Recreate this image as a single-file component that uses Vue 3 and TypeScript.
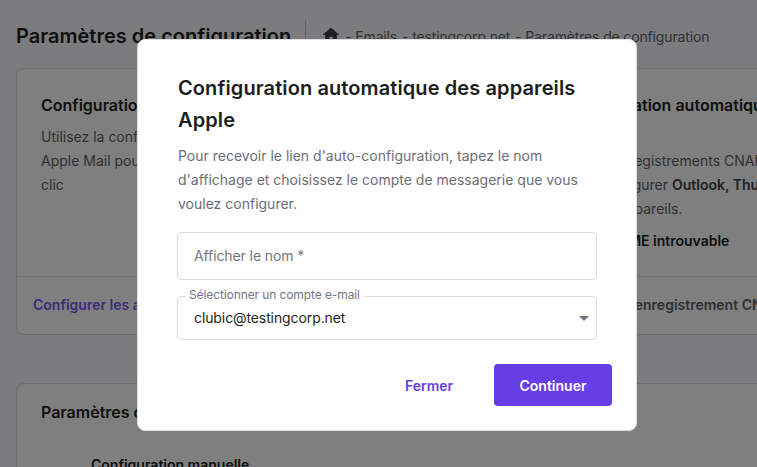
<script setup lang="ts">
const email = 'clubic@testingcorp.net'
</script>

<template>
  <div class="page">
    <header class="head">
      <h1 class="page-title">Paramètres de configuration</h1>
      <nav class="crumbs">
        <svg class="home" viewBox="0 0 24 24" width="20" height="20"><path d="M10 20v-6h4v6h5v-8h3L12 3 2 12h3v8z" fill="#3f3e48" /></svg>
        <span>- Emails</span><span>- testingcorp.net</span><span>- Paramètres de configuration</span>
      </nav>
    </header>

    <section class="cards">
      <article class="card">
        <div class="card-body">
          <h2>Configuration automatique</h2>
          <p>Utilisez la configuration automatique de<br />Apple Mail pour configurer votre compte en un<br />clic</p>
        </div>
        <div class="card-foot">Configurer les appareils Apple</div>
      </article>
      <article class="card">
        <div class="card-body">
          <h2>Configuration automatique des<br />appareils</h2>
          <p>Via les enregistrements CNAME, vous pouvez<br />pour configurer <b>Outlook, Thunderbird</b> et<br />par vos appareils.</p>
          <p class="warn">CNAME introuvable</p>
        </div>
        <div class="card-foot muted">Ajouter un enregistrement CNAME</div>
      </article>
    </section>

    <section class="card settings">
      <h2>Paramètres du compte</h2>
      <h3>Configuration manuelle</h3>
    </section>

    <div class="overlay">
      <div class="modal">
        <h2 class="modal-title">Configuration automatique des appareils Apple</h2>
        <p class="modal-text">Pour recevoir le lien d'auto-configuration, tapez le nom d'affichage et choisissez le compte de messagerie que vous voulez configurer.</p>
        <div class="field name">Afficher le nom *</div>
        <div class="field select">
          <span class="legend">Sélectionner un compte e-mail</span>
          <span class="value">{{ email }}</span>
          <span class="caret"></span>
        </div>
        <div class="actions">
          <button class="close" type="button">Fermer</button>
          <button class="go" type="button">Continuer</button>
        </div>
      </div>
    </div>
  </div>
</template>

<style scoped>
.page {
  position: relative;
  width: 757px;
  height: 467px;
  overflow: hidden;
  padding: 20px 0 0 16px;
  box-sizing: border-box;
  background: #f9f8ff;
  font-family: Inter, "Liberation Sans", sans-serif;
  color: #1d1e20;
}
.head {
  display: flex;
  align-items: center;
  height: 32px;
  margin-bottom: 16px;
}
.page-title {
  margin: 0;
  padding-right: 14px;
  font-size: 20px;
  font-weight: 600;
  line-height: 32px;
  letter-spacing: 0.01px;
  white-space: nowrap;
  border-right: 1px solid #c8c8cc;
}
.crumbs {
  display: flex;
  align-items: center;
  gap: 5px;
  padding-left: 15px;
  font-size: 14px;
  letter-spacing: -0.15px;
  color: #5f6066;
  white-space: nowrap;
}
.home { margin: -3px -1px 0 0; }
.cards {
  display: grid;
  grid-template-columns: 500px 500px;
  gap: 24px;
  width: 1024px;
}
.card {
  background: #fff;
  border: 1px solid #d8dae0;
  border-radius: 8px;
  box-sizing: border-box;
}
.cards .card {
  height: 267px;
  display: flex;
  flex-direction: column;
}
.card-body {
  flex: 1;
  padding: 24px 24px 0;
  white-space: nowrap;
}
.card h2 {
  margin: 0 0 8px;
  font-size: 16px;
  font-weight: 600;
  line-height: 24px;
}
.card-body p {
  margin: 0;
  font-size: 14px;
  line-height: 24px;
  color: #5f6066;
}
.card-body b {
  font-weight: 600;
  color: #3f4046;
}
.card-body .warn {
  margin-top: 8px;
  padding-left: 32px;
  font-weight: 600;
  color: #1d1e20;
}
.card-foot {
  height: 57px;
  line-height: 56px;
  padding-left: 16px;
  border-top: 1px solid #d8dae0;
  font-size: 14px;
  font-weight: 600;
  color: #7a55f0;
}
.card-foot.muted {
  padding-left: 20px;
  color: #5f6066;
}
.settings {
  margin-top: 48px;
  width: 1024px;
  height: 200px;
  padding: 16px 24px;
}
.settings h3 {
  margin: 31px 0 0 50px;
  font-size: 14px;
  font-weight: 600;
  line-height: 20px;
}
.overlay {
  position: absolute;
  inset: 0;
  display: flex;
  justify-content: center;
  align-items: flex-start;
  padding: 39px 0 0 17px;
  box-sizing: border-box;
  background: rgba(0, 0, 0, 0.5);
}
.modal {
  width: 500px;
  height: 392px;
  box-sizing: border-box;
  padding: 32px 24px 0 40px;
  background: #fff;
  border: 1px solid #dedede;
  border-radius: 8px;
}
.modal-title {
  margin: 0 0 8px;
  font-size: 20px;
  font-weight: 600;
  line-height: 32px;
  letter-spacing: 0.1px;
}
.modal-text {
  margin: 0 15px 16px 0;
  font-size: 14px;
  line-height: 24px;
  color: #6d6d78;
}
.field {
  position: relative;
  width: 420px;
  margin-left: -1px;
  box-sizing: border-box;
  border: 1px solid #dadce0;
  border-radius: 4px;
  font-size: 14px;
  letter-spacing: -0.1px;
  padding-left: 16px;
}
.name {
  height: 48px;
  line-height: 46px;
  color: #727586;
  margin-bottom: 16px;
}
.select {
  height: 44px;
  line-height: 42px;
}
.legend {
  position: absolute;
  top: -9px;
  left: 7px;
  padding: 0 4px;
  background: #fff;
  font-size: 12px;
  letter-spacing: -0.1px;
  line-height: 14px;
  color: #727586;
}
.caret {
  position: absolute;
  right: 7px;
  top: 19px;
  border: 5px solid transparent;
  border-top: 5px solid #727586;
  border-bottom: 0;
}
.actions {
  display: flex;
  justify-content: flex-end;
  align-items: center;
  margin-top: 24px;
}
.actions button {
  height: 42px;
  padding: 0;
  border: 0;
  border-radius: 4px;
  font: 600 14px Inter, "Liberation Sans", sans-serif;
}
.close {
  width: 96px;
  margin-right: 17px;
  background: none;
  color: #673de6;
}
.go {
  width: 118px;
  background: #673de6;
  color: #fff;
}
</style>
